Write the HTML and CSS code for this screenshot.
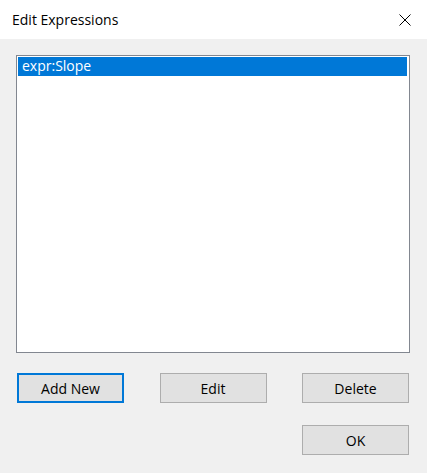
FILE: index.html
```html
<!DOCTYPE html>
<html>
<head>
<meta charset="utf-8">
<link rel="stylesheet" href="styles.css">
</head>
<body>
<div class="window">
  <div class="titlebar">
    <span class="title">Edit Expressions</span>
    <span class="close">
      <svg width="12" height="12" viewBox="0 0 12 12"><path d="M0.5 0.5 L11.5 11.5 M11.5 0.5 L0.5 11.5" stroke="#000" stroke-width="1" fill="none"/></svg>
    </span>
  </div>
  <div class="content">
    <div class="listbox">
      <div class="item selected">expr:Slope</div>
    </div>
    <div class="row actions">
      <button class="btn focused">Add New</button>
      <button class="btn">Edit</button>
      <button class="btn">Delete</button>
    </div>
    <div class="row footer">
      <button class="btn">OK</button>
    </div>
  </div>
</div>
</body>
</html>
```
FILE: styles.css
```css
html, body {
  margin: 0;
  padding: 0;
}
body {
  width: 427px;
  height: 473px;
  overflow: hidden;
  font-family: "Open Sans", "Noto Sans", "Liberation Sans", sans-serif;
  background: #f0f0f0;
}
.window {
  display: flex;
  flex-direction: column;
  height: 473px;
}
.titlebar {
  height: 39px;
  background: #ffffff;
  display: flex;
  align-items: center;
  justify-content: space-between;
  padding: 0 16px 0 12px;
  box-sizing: border-box;
}
.title {
  font-size: 14px;
  color: #000;
  margin-top: -1px;
}
.close {
  display: flex;
  width: 12px;
  height: 12px;
}
.content {
  flex: 1;
  background: #f0f0f0;
  padding: 16px 17px 0 16px;
  display: flex;
  flex-direction: column;
}
.listbox {
  height: 298px;
  box-sizing: border-box;
  border: 1px solid #828790;
  background: #ffffff;
  padding: 1px 2px 1px 1px;
}
.item {
  height: 19px;
  line-height: 18px;
  font-size: 14px;
  padding-left: 4px;
  color: #000;
}
.item.selected {
  background: #0078d7;
  color: #ffffff;
}
.row {
  display: flex;
}
.actions {
  margin-top: 20px;
  justify-content: space-between;
  padding: 0 1px 0 1px;
}
.footer {
  margin-top: 22px;
  justify-content: flex-end;
  padding-right: 1px;
}
.btn {
  width: 107px;
  height: 30px;
  box-sizing: border-box;
  border: 1px solid #adadad;
  background: #e1e1e1;
  font-family: "Open Sans", "Noto Sans", "Liberation Sans", sans-serif;
  font-size: 14px;
  color: #000;
  padding: 0;
  margin: 0;
}
.btn.focused {
  border: 2px solid #0078d7;
}
```
